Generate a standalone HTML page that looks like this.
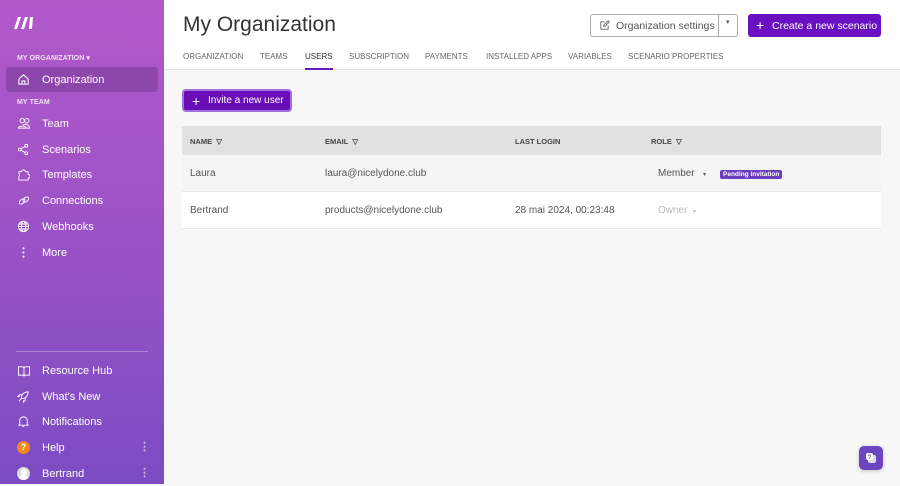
<!DOCTYPE html>
<html><head><meta charset="utf-8"><style>
*{box-sizing:border-box;margin:0;padding:0}
body{width:900px;height:484px;overflow:hidden;font-family:"Liberation Sans",sans-serif;background:#f7f7f7;position:relative}
.sb{position:absolute;left:0;top:0;width:164px;height:484px;background:linear-gradient(180deg,#b259c9 0%,#9a52c6 50%,#7b4cc3 100%);color:#fff}
.sec{position:absolute;left:17px;font-size:7px;font-weight:bold;color:#f0e0f5;letter-spacing:.1px}
.it{position:absolute;left:6px;width:152px;height:25px;font-size:11px;color:#fff;display:flex;align-items:center;padding-left:36px}
.it svg{position:absolute;left:11px;top:6px}
.act{background:rgba(90,40,120,.35);border-radius:3px}
.main{position:absolute;left:164px;top:0;right:0}
h1{position:absolute;left:19px;top:13px;font-size:21px;font-weight:normal;color:#333}
.top{position:absolute;left:0;right:0;top:0;height:70px;background:#fff;border-bottom:1px solid #e3e3e3}
.tabs span{position:absolute;top:52px;font-size:8px;color:#666;white-space:nowrap}
.tabs span.a{color:#333;border-bottom:2px solid #6a1bb3;padding-bottom:7px}
.btn1{position:absolute;left:426px;top:14px;width:148px;height:23px;border:1px solid #aaa;border-radius:3px;background:#fff;font-size:10.5px;color:#555;display:flex;align-items:center;white-space:nowrap}
.btn2{position:absolute;left:584px;top:14px;width:133px;height:23px;background:#6a0fc2;border-radius:3px;color:#fff;font-size:10.5px;display:flex;align-items:center;padding-left:24px;white-space:nowrap}
.inv{position:absolute;left:18px;top:89px;width:110px;height:23px;background:#6a0fb8;border:2px solid #a070e0;border-radius:4px;color:#fff;font-size:10px;display:flex;align-items:center;padding-left:24px;white-space:nowrap}
.tbl{position:absolute;left:18px;top:126px;width:699px}
.row{position:relative;height:37px;font-size:10px;color:#555;border-bottom:1px solid #e8e8e8}
.row span{position:absolute;top:13px;white-space:nowrap}
.hd{height:29px;background:#e1e1e1;font-size:7.5px;font-weight:bold;color:#444;border:none}
.hd span{top:11px}
</style></head><body>
<div class="sb">
<svg style="position:absolute;left:13px;top:15px" width="22" height="15" viewBox="0 0 22 15"><path d="M1 14L5 2h3L4 14zM8 14L12 2h3l-4 12zM16 14l1-12h3l-1 12z" fill="#fff"/></svg>
<div class="sec" style="top:54px">MY ORGANIZATION ▾</div>
<div class="it act" style="top:67px"><svg width="13" height="13" viewBox="0 0 14 14" fill="none" stroke="#fff" stroke-width="1.1"><path d="M2 6.5L7 2l5 4.5V12H2z M5.5 12V8.5h3V12"/></svg>Organization</div>
<div class="sec" style="top:99px">MY TEAM</div>
<div class="it" style="top:111px"><svg width="14" height="13" viewBox="0 0 14 14" fill="none" stroke="#fff" stroke-width="1"><circle cx="5" cy="4" r="2.3"/><circle cx="10" cy="4" r="2.3"/><path d="M1 12c0-3 8-3 8 0zM6 9c2-2 7-1 7 3H9"/></svg>Team</div>
<div class="it" style="top:137px"><svg width="13" height="13" viewBox="0 0 14 14" fill="none" stroke="#fff" stroke-width="1"><circle cx="3" cy="7" r="1.5"/><circle cx="10" cy="3" r="1.5"/><circle cx="10" cy="11" r="1.5"/><path d="M4.3 6.3l4.4-2.6M4.3 7.7l4.4 2.6"/></svg>Scenarios</div>
<div class="it" style="top:162px"><svg width="13" height="13" viewBox="0 0 14 14" fill="none" stroke="#fff" stroke-width="1"><path d="M2 4h3a2 2 0 014 0h3v3a2 2 0 010 4v2H2V9a2 2 0 000-3z"/></svg>Templates</div>
<div class="it" style="top:188px"><svg width="14" height="13" viewBox="0 0 14 14" fill="none" stroke="#fff" stroke-width="1"><ellipse cx="5" cy="8" rx="3.5" ry="2.2" transform="rotate(-40 5 8)"/><ellipse cx="9" cy="6" rx="3.5" ry="2.2" transform="rotate(-40 9 6)"/></svg>Connections</div>
<div class="it" style="top:214px"><svg width="13" height="13" viewBox="0 0 14 14" fill="none" stroke="#fff" stroke-width="1"><circle cx="7" cy="7" r="5.5"/><ellipse cx="7" cy="7" rx="2.3" ry="5.5"/><path d="M1.5 7h11M2.5 4.3h9M2.5 9.7h9"/></svg>Webhooks</div>
<div class="it" style="top:240px"><svg width="13" height="13" viewBox="0 0 14 14" fill="#fff"><circle cx="7" cy="2.5" r="1.1"/><circle cx="7" cy="7" r="1.1"/><circle cx="7" cy="11.5" r="1.1"/></svg>More</div>
<div style="position:absolute;left:16px;top:351px;width:132px;height:1px;background:rgba(255,255,255,.3)"></div>
<div class="it" style="top:358px"><svg width="14" height="13" viewBox="0 0 14 14" fill="none" stroke="#fff" stroke-width="1"><path d="M1 3h5l1 1 1-1h5v9H8l-1 1-1-1H1zM7 4v9"/></svg>Resource Hub</div>
<div class="it" style="top:384px"><svg width="13" height="13" viewBox="0 0 14 14" fill="none" stroke="#fff" stroke-width="1"><path d="M5 9C4 6 7 2 12 2c0 5-4 8-7 7zM5 9l-3 3M3 7H1l2-2h2M7 11v2l2-2V9"/></svg>What's New</div>
<div class="it" style="top:409px"><svg width="13" height="13" viewBox="0 0 14 14" fill="none" stroke="#fff" stroke-width="1"><path d="M3 10V6a4 4 0 018 0v4l1 1H2zM6 12.5h2"/></svg>Notifications</div>
<div class="it" style="top:435px"><span style="position:absolute;left:11px;top:6px;width:13px;height:13px;border-radius:50%;background:#f08a1c;font-size:9px;font-weight:bold;text-align:center;line-height:13px">?</span>Help<span style="position:absolute;right:8px;top:5px;font-size:11px;font-weight:bold;opacity:.6">⋮</span></div>
<div class="it" style="top:461px"><span style="position:absolute;left:11px;top:6px;width:13px;height:13px;border-radius:50%;background:#ddd;overflow:hidden"><span style="position:absolute;left:3.5px;top:2px;width:6px;height:6px;border-radius:50%;background:#fff"></span><span style="position:absolute;left:1px;top:8px;width:11px;height:8px;border-radius:50%;background:#fff"></span></span>Bertrand<span style="position:absolute;right:8px;top:5px;font-size:11px;font-weight:bold;opacity:.6">⋮</span></div>
</div>
<div class="main">
<div class="top"></div>
<h1>My Organization</h1>
<div class="tabs"><span style="left:19px">ORGANIZATION</span><span style="left:96px">TEAMS</span><span class="a" style="left:141px">USERS</span><span style="left:185px">SUBSCRIPTION</span><span style="left:261px">PAYMENTS</span><span style="left:322px">INSTALLED APPS</span><span style="left:404px">VARIABLES</span><span style="left:464px">SCENARIO PROPERTIES</span></div>
<div class="btn1"><svg style="margin:0 6px 0 8px" width="11" height="11" viewBox="0 0 12 12" fill="none" stroke="#666" stroke-width="1"><path d="M6 2H2v8h8V6M5 7l.5-2L10 .8l1.2 1.2L7 6.5z"/></svg>Organization settings<span style="position:absolute;left:127px;top:0;width:1px;height:21px;background:#aaa"></span><span style="position:absolute;left:135px;top:3px;font-size:7px">▾</span></div>
<div class="btn2"><span style="position:absolute;left:8px;top:3px;font-size:14px">+</span>Create a new scenario</div>
<div class="inv"><span style="position:absolute;left:8px;top:2px;font-size:14px">+</span>Invite a new user</div>
<div class="tbl">
<div class="row hd"><span style="left:8px">NAME &nbsp;▽</span><span style="left:143px">EMAIL &nbsp;▽</span><span style="left:333px">LAST LOGIN</span><span style="left:469px">ROLE &nbsp;▽</span></div>
<div class="row" style="background:#f5f5f5"><span style="left:8px">Laura</span><span style="left:143px">laura@nicelydone.club</span><span style="left:476px">Member &nbsp;&nbsp;<small style="font-size:6px">▾</small></span><span style="left:538px;top:15px;background:#6b3fc0;color:#fff;font-size:6.5px;font-weight:bold;padding:1px 3px;border-radius:2px">Pending invitation</span></div>
<div class="row" style="background:#fff"><span style="left:8px">Bertrand</span><span style="left:143px">products@nicelydone.club</span><span style="left:333px">28 mai 2024, 00:23:48</span><span style="left:476px;color:#bbb">Owner &nbsp;<small style="font-size:6px">▾</small></span></div>
</div>
<div style="position:absolute;left:695px;top:446px;width:24px;height:24px;border-radius:5px;background:#6b46c0;box-shadow:0 1px 4px rgba(0,0,0,.2)"><svg style="position:absolute;left:6px;top:6px" width="12" height="12" viewBox="0 0 12 12"><rect x="3" y="3" width="8" height="8" rx="2" fill="#ddd"/><rect x="1" y="1" width="7" height="7" rx="2" fill="#fff"/><text x="2.6" y="7" font-size="6" font-weight="bold" fill="#6b46c0" font-family="Liberation Sans">?</text></svg></div>
</div>
</body></html>
